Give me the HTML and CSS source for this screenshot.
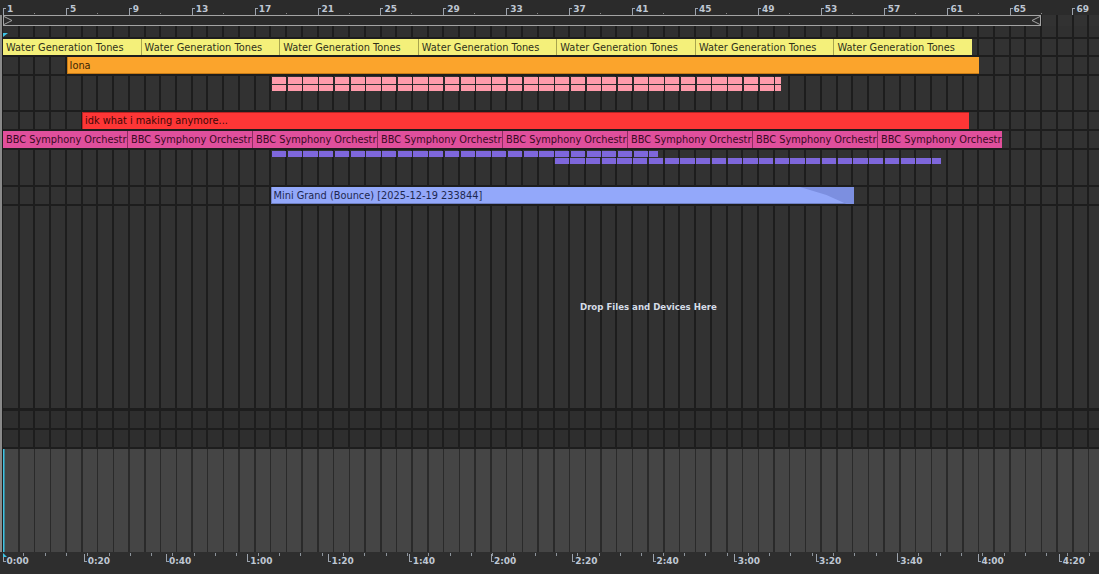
FILE: index.html
```html
<!DOCTYPE html>
<html>

<head>
  <title>Arrangement</title>
  <link rel="stylesheet" href="styles.css">
</head>

<body>

  <div class="arrangement">

    <div class="ruler-bars">
      <span class="bar">1</span>
      <span class="bar">5</span>
      <span class="bar">9</span>
      <span class="bar">13</span>
      <span class="bar">17</span>
      <span class="bar">21</span>
      <span class="bar">25</span>
      <span class="bar">29</span>
      <span class="bar">33</span>
      <span class="bar">37</span>
      <span class="bar">41</span>
      <span class="bar">45</span>
      <span class="bar">49</span>
      <span class="bar">53</span>
      <span class="bar">57</span>
      <span class="bar">61</span>
      <span class="bar">65</span>
      <span class="bar">69</span>
    </div>

    <div class="tracks">

      <div class="loop-row">
        <div class="loop-brace">
          <svg class="loop-mark" width="9" height="9" viewBox="0 0 9 9">
            <polyline points="0,0.5 8,4.5 0,8.5" fill="none" stroke="#a4a4a4" stroke-width="1" />
          </svg>
          <svg class="loop-mark" width="9" height="9" viewBox="0 0 9 9">
            <polyline points="9,0.5 1,4.5 9,8.5" fill="none" stroke="#a4a4a4" stroke-width="1" />
          </svg>
        </div>
      </div>

      <div class="lane lane-top">
        <span class="playhead-top"></span>
      </div>

      <div class="lane lane-short">
        <div class="clip clip-yellow" style="left:0;width:969px">
          <span class="seg">Water Generation Tones</span>
          <span class="seg">Water Generation Tones</span>
          <span class="seg">Water Generation Tones</span>
          <span class="seg">Water Generation Tones</span>
          <span class="seg">Water Generation Tones</span>
          <span class="seg">Water Generation Tones</span>
          <span class="seg">Water Generation Tones</span>
        </div>
      </div>

      <div class="lane">
        <div class="clip clip-orange" style="left:63.5px;width:912.5px">
          <span class="seg">Iona</span>
        </div>
      </div>

      <div class="lane lane-tall">
        <div class="strip strip-pink" style="left:267.5px;width:510px;top:1px;height:7px"></div>
        <div class="strip strip-pink" style="left:267.5px;width:510px;top:9px;height:6px"></div>
      </div>

      <div class="lane">
        <div class="clip clip-red" style="left:79px;width:887px">
          <span class="seg">idk what i making anymore...</span>
        </div>
      </div>

      <div class="lane">
        <div class="clip clip-pink" style="left:0;width:999px">
          <span class="seg">BBC Symphony Orchestra</span>
          <span class="seg">BBC Symphony Orchestra</span>
          <span class="seg">BBC Symphony Orchestra</span>
          <span class="seg">BBC Symphony Orchestra</span>
          <span class="seg">BBC Symphony Orchestra</span>
          <span class="seg">BBC Symphony Orchestra</span>
          <span class="seg">BBC Symphony Orchestra</span>
          <span class="seg">BBC Symphony Orchestra</span>
        </div>
      </div>

      <div class="lane lane-taller">
        <div class="strip strip-purple" style="left:267.5px;width:387.5px;top:1px;height:6px"></div>
        <div class="strip strip-purple" style="left:551px;width:387px;top:8px;height:6px"></div>
      </div>

      <div class="lane">
        <div class="clip clip-blue" style="left:267.5px;width:583.5px">
          <span class="seg">Mini Grand (Bounce) [2025-12-19 233844]</span>
          <span class="fade"></span>
        </div>
      </div>

      <div class="lane lane-drop">
        <span class="drop-hint">Drop Files and Devices Here</span>
      </div>

      <div class="lane lane-dim"></div>
      <div class="lane lane-dim"></div>

      <div class="lane lane-light"></div>

    </div>

    <div class="ruler-time">
      <span class="time">0:00</span>
      <span class="time">0:20</span>
      <span class="time">0:40</span>
      <span class="time">1:00</span>
      <span class="time">1:20</span>
      <span class="time">1:40</span>
      <span class="time">2:00</span>
      <span class="time">2:20</span>
      <span class="time">2:40</span>
      <span class="time">3:00</span>
      <span class="time">3:20</span>
      <span class="time">3:40</span>
      <span class="time">4:00</span>
      <span class="time">4:20</span>
      <span class="playhead-foot"></span>
    </div>

  </div>

</body>

</html>
```

FILE: styles.css
```css
:root {
  --line: #1d1d1d;
  --grid: repeating-linear-gradient(90deg, transparent 0 13.73px, var(--line) 13.73px 15.73px);
  --grid-thin: repeating-linear-gradient(90deg, transparent 0 14.23px, #2a2a2a 14.23px 15.73px);
  --label: #bfc7d3;
  --tick: #9ca3ad;
  --cyan: #3fc4e4;
}

* {
  box-sizing: border-box;
}

html,
body {
  margin: 0;
  height: 100%;
}

body {
  background: var(--line);
  overflow: hidden;
  font-family: "DejaVu Sans", sans-serif;
}

.arrangement {
  display: flex;
  flex-direction: column;
  height: 574px;
}

/* bar ruler */

.ruler-bars {
  flex: none;
  height: 15px;
  display: flex;
  padding-left: 3px;
  background: #2b2b2b;
  overflow: hidden;
}

.bar {
  flex: 0 0 62.92px;
  position: relative;
  padding: 4.5px 0 0 4px;
  font-size: 9px;
  font-weight: bold;
  line-height: 1;
  color: var(--label);
}

.bar::before {
  content: "";
  position: absolute;
  left: 0;
  top: 8px;
  width: 2px;
  height: 7px;
  border-left: 1px solid var(--tick);
  border-top: 1px solid var(--tick);
}

.bar::after {
  content: "";
  position: absolute;
  left: 31px;
  top: 13px;
  width: 1px;
  height: 1px;
  background: #8c8c8c;
}

/* track area */

.tracks {
  flex: none;
  display: flex;
  flex-direction: column;
  padding-left: 3px;
  background: linear-gradient(to right, #8a8a8a 2px, var(--line) 2px);
}

.loop-row {
  height: 11px;
  background: var(--grid), #323232;
  background-attachment: fixed;
  background-position: 4px 0;
}

.loop-brace {
  width: 1038px;
  height: 11px;
  display: flex;
  justify-content: space-between;
  align-items: center;
  border: 1px solid #a4a4a4;
  background: #2b2b2b;
}

.loop-mark {
  display: block;
}

.lane {
  flex: none;
  position: relative;
  height: 17px;
  margin-bottom: 2px;
  background: var(--grid), #323232;
  background-attachment: fixed;
  background-position: 4px 0;
}

.lane-top {
  height: 11px;
  background-color: #303030;
}

.lane-short {
  height: 16px;
}

.lane-tall {
  height: 34px;
}

.lane-taller {
  height: 35px;
}

.lane-drop {
  height: 202px;
  margin-bottom: 3px;
  display: flex;
  align-items: center;
  padding-left: 577px;
}

.lane-dim {
  background-color: #2e2e2e;
}

.lane-light {
  height: 103px;
  margin-bottom: 0;
  background: var(--grid-thin), #454545;
  background-attachment: fixed;
  background-position: 4px 0;
  box-shadow: inset 1.5px 0 var(--cyan);
}

.playhead-top {
  position: absolute;
  left: 0;
  top: 7px;
  width: 5px;
  height: 4px;
  background: var(--cyan);
  clip-path: polygon(0 0, 100% 0, 0 100%);
}

.drop-hint {
  font-size: 8.6px;
  font-weight: bold;
  color: #d6dde7;
}

/* clips */

.clip {
  position: absolute;
  top: 0;
  bottom: 0;
  display: flex;
  overflow: hidden;
  font-size: 9.8px;
  white-space: nowrap;
}

.seg {
  flex: 1;
  min-width: 0;
  overflow: hidden;
  padding-left: 3px;
  display: flex;
  align-items: center;
}

.clip-yellow {
  background: #f4f07a;
  color: #30301a;
}

.clip-yellow .seg + .seg {
  border-left: 1px solid #a7a44e;
}

.clip-orange {
  background: #fba42c;
  color: #3b2405;
  box-shadow: inset 0 -1px #c97c16, inset 1px 0 #c97c16;
}

.clip-red {
  background: #fe3636;
  color: #3e0707;
  box-shadow: inset 0 1px #b82323, inset 1px 0 #b82323;
}

.clip-pink {
  background: #e04f9c;
  color: #3b0a24;
}

.clip-pink .seg + .seg {
  border-left: 1px solid #8e2e60;
}

.clip-blue {
  background: #93a8fa;
  color: #1d2750;
  box-shadow: inset 0 -1px #6f80c4, inset 1px 0 #6f80c4;
}

.fade {
  position: absolute;
  right: 0;
  top: 0;
  bottom: 0;
  width: 54px;
  background: #7c8fe0;
  clip-path: polygon(0 0, 100% 0, 100% 100%, 86% 100%, 49% 47%);
}

.strip {
  position: absolute;
  background-attachment: fixed;
  background-position: 4px 0;
}

.strip-pink {
  background-image: var(--grid-thin);
  background-color: #ff9bab;
}

.strip-purple {
  background-image: var(--grid-thin);
  background-color: #7e67dc;
}

/* time ruler */

.ruler-time {
  flex: none;
  position: relative;
  height: 22px;
  display: flex;
  padding-left: 3px;
  background: #2e2e2e;
  overflow: hidden;
}

.ruler-time::before {
  content: "";
  position: absolute;
  left: 3px;
  right: 0;
  top: 1px;
  height: 3px;
  background: repeating-linear-gradient(90deg, transparent 0 20.31px, #8d949c 20.31px 21.31px);
}

.time {
  flex: 0 0 81.25px;
  position: relative;
  padding: 5px 0 0 3.5px;
  font-size: 9px;
  font-weight: bold;
  line-height: 1;
  color: var(--label);
}

.time::before {
  content: "";
  position: absolute;
  left: 0;
  top: 2px;
  width: 2px;
  height: 7px;
  border-left: 1px solid var(--tick);
  border-bottom: 1px solid var(--tick);
}

.playhead-foot {
  position: absolute;
  left: 3px;
  top: 1px;
  width: 4px;
  height: 4px;
  background: var(--cyan);
  clip-path: polygon(0 0, 0 100%, 100% 100%);
}
```
